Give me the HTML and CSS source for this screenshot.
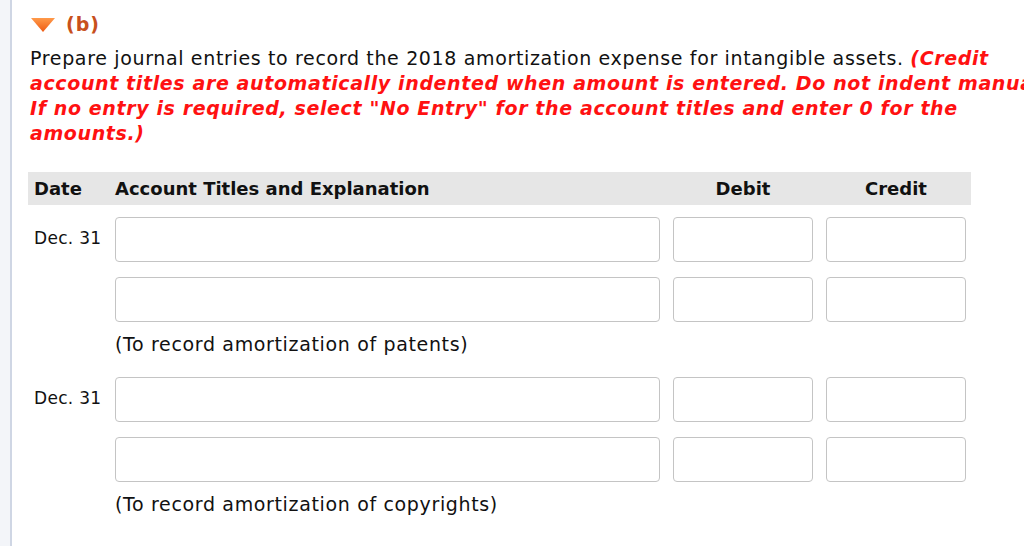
FILE: index.html
```html
<!DOCTYPE html>
<html>
<head>
<meta charset="utf-8">
<link rel="stylesheet" href="styles.css">
</head>
<body>
<div class="page">
  <div class="strip"></div>
  <div class="content">
    <div class="part-title">
      <svg class="caret" width="24" height="14" viewBox="0 0 24 14">
        <defs>
          <linearGradient id="g" x1="0" y1="0" x2="0" y2="1">
            <stop offset="0" stop-color="#ff9a4a"/>
            <stop offset="1" stop-color="#ee5a12"/>
          </linearGradient>
        </defs>
        <polygon points="0,0 24,0 12,14" fill="url(#g)"/>
      </svg>
      <span class="part-label">(b)</span>
    </div>
    <p class="question">Prepare journal entries to record the 2018 amortization expense for intangible assets. <em class="warn">(Credit<br>account titles are automatically indented when amount is entered. Do not indent manually.<br>If no entry is required, select "No Entry" for the account titles and enter 0 for the<br>amounts.)</em></p>

    <div class="journal">
      <div class="jhead">
        <div class="hcell date">Date</div>
        <div class="hcell">Account Titles and Explanation</div>
        <div class="hcell center">Debit</div>
        <div class="hcell center">Credit</div>
      </div>

      <div class="jrow">
        <div class="date">Dec. 31</div>
        <div class="field"></div>
        <div class="field"></div>
        <div class="field"></div>
      </div>
      <div class="jrow">
        <div class="date"></div>
        <div class="field"></div>
        <div class="field"></div>
        <div class="field"></div>
      </div>
      <div class="note">(To record amortization of patents)</div>

      <div class="jrow">
        <div class="date">Dec. 31</div>
        <div class="field"></div>
        <div class="field"></div>
        <div class="field"></div>
      </div>
      <div class="jrow">
        <div class="date"></div>
        <div class="field"></div>
        <div class="field"></div>
        <div class="field"></div>
      </div>
      <div class="note">(To record amortization of copyrights)</div>
    </div>
  </div>
</div>
</body>
</html>
```

FILE: styles.css
```css
html, body {
  margin: 0;
  padding: 0;
  background: #ffffff;
}

body {
  font-family: "DejaVu Sans", Verdana, sans-serif;
  color: #111;
  overflow: hidden;
  height: 546px;
}

.page {
  display: flex;
  height: 546px;
}

.strip {
  width: 10px;
  flex: none;
  background: #f3f5f9;
  border-right: 2px solid #cfd6e4;
}

.content {
  flex: 1;
  padding-left: 16px;
  padding-top: 12px;
  min-width: 0;
}

.part-title {
  display: flex;
  align-items: center;
  height: 25px;
  padding-left: 3px;
}

.caret {
  display: block;
  margin-top: 1px;
}

.part-label {
  margin-left: 11px;
  font-size: 19px;
  letter-spacing: 1px;
  font-weight: bold;
  color: #c8501c;
  line-height: 25px;
}

.question {
  margin: 9px 0 0 2px;
  font-size: 19px;
  letter-spacing: 0.65px;
  line-height: 25px;
  white-space: nowrap;
}

.warn {
  color: #ff1111;
  font-weight: bold;
  font-style: italic;
  letter-spacing: 0.62px;
}

.journal {
  margin-top: 26px;
  width: 943px;
}

.jhead,
.jrow {
  display: grid;
  grid-template-columns: 74px 545px 140px 140px;
  column-gap: 13px;
}

.jhead {
  background: #e6e6e6;
  height: 33px;
  align-items: center;
  font-weight: bold;
  font-size: 18px;
}

.hcell.date {
  padding-left: 6px;
}

.hcell.center {
  text-align: center;
}

.jrow {
  height: 45px;
  margin-top: 12px;
}

.jrow + .jrow {
  margin-top: 15px;
}

.jrow .date {
  padding-left: 6px;
  font-size: 17px;
  letter-spacing: 0.3px;
  line-height: 42px;
  white-space: nowrap;
}

.field {
  box-sizing: border-box;
  height: 45px;
  border: 1px solid #c4c4c4;
  border-radius: 4px;
  background: #fff;
}

.note {
  margin: 10px 0 20px 87px;
  font-size: 19px;
  letter-spacing: 0.65px;
  line-height: 25px;
  height: 25px;
}
```
